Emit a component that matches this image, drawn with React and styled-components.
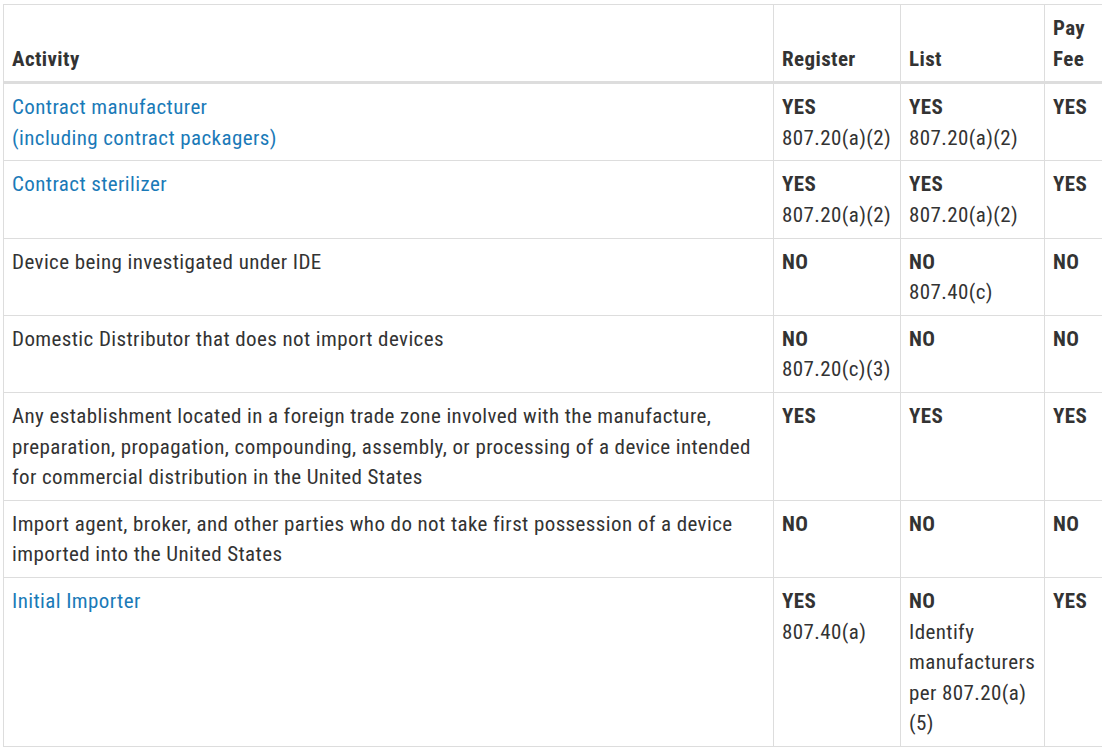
import React from "react";
import styled, { createGlobalStyle } from "styled-components";

const GlobalStyle = createGlobalStyle`
  html, body {
    margin: 0;
    padding: 0;
    background: #fff;
    overflow: hidden;
  }
  body {
    font-family: "Roboto Condensed", Roboto, "Liberation Sans", sans-serif;
    font-stretch: 92%;
    color: #333;
  }
`;

const rows = [
  {
    activity: ["Contract manufacturer", "(including contract packagers)"],
    link: true,
    register: ["YES", "807.20(a)(2)"],
    list: ["YES", "807.20(a)(2)"],
    fee: "YES",
  },
  {
    activity: ["Contract sterilizer"],
    link: true,
    register: ["YES", "807.20(a)(2)"],
    list: ["YES", "807.20(a)(2)"],
    fee: "YES",
  },
  {
    activity: ["Device being investigated under IDE"],
    register: ["NO"],
    list: ["NO", "807.40(c)"],
    fee: "NO",
  },
  {
    activity: ["Domestic Distributor that does not import devices"],
    register: ["NO", "807.20(c)(3)"],
    list: ["NO"],
    fee: "NO",
  },
  {
    activity: [
      "Any establishment located in a foreign trade zone involved with the manufacture, preparation, propagation, compounding, assembly, or processing of a device intended for commercial distribution in the United States",
    ],
    register: ["YES"],
    list: ["YES"],
    fee: "YES",
  },
  {
    activity: [
      "Import agent, broker, and other parties who do not take first possession of a device imported into the United States",
    ],
    register: ["NO"],
    list: ["NO"],
    fee: "NO",
  },
  {
    activity: ["Initial Importer"],
    link: true,
    register: ["YES", "807.40(a)"],
    list: ["NO", "Identify manufacturers per 807.20(a)(5)"],
    fee: "YES",
  },
];

export default function App() {
  return (
    <>
      <GlobalStyle />
      <Page>
        <Table>
          <colgroup>
            <col style={{ width: 770 }} />
            <col style={{ width: 127 }} />
            <col style={{ width: 144 }} />
            <col style={{ width: 66 }} />
          </colgroup>
          <thead>
            <tr>
              <Th>Activity</Th>
              <Th>Register</Th>
              <Th>List</Th>
              <Th>Pay Fee</Th>
            </tr>
          </thead>
          <tbody>
            {rows.map((r, i) => (
              <tr key={i}>
                <Td>
                  {r.link ? (
                    <Link href="#">
                      {r.activity.map((t, j) => (
                        <React.Fragment key={j}>
                          {j > 0 && <br />}
                          {t}
                        </React.Fragment>
                      ))}
                    </Link>
                  ) : (
                    r.activity[0]
                  )}
                </Td>
                <Td>
                  <Strong>{r.register[0]}</Strong>
                  {r.register[1] && (
                    <>
                      <br />
                      {r.register[1]}
                    </>
                  )}
                </Td>
                <Td>
                  <Strong>{r.list[0]}</Strong>
                  {r.list[1] && (
                    <>
                      <br />
                      {r.list[1]}
                    </>
                  )}
                </Td>
                <Td>
                  <Strong>{r.fee}</Strong>
                </Td>
              </tr>
            ))}
          </tbody>
        </Table>
      </Page>
    </>
  );
}

const Page = styled.div`
  padding: 4px 0 0 3px;
  width: 1200px;
`;

const Table = styled.table`
  border-collapse: collapse;
  table-layout: fixed;
  width: 1107px;
  font-size: 21px;
  line-height: 30.6px;
  letter-spacing: 0.4px;
  border: 1px solid #ddd;
`;

const Th = styled.th`
  text-align: left;
  vertical-align: bottom;
  font-weight: 700;
  color: #333;
  padding: 8px 8px 7px;
  border: 1px solid #ddd;
  border-bottom: 3px solid #ddd;
`;

const Td = styled.td`
  vertical-align: top;
  padding: 8px 8px 7px;
  border: 1px solid #ddd;
  color: #333;
`;

const Strong = styled.strong`
  font-weight: 700;
`;

const Link = styled.a`
  color: #1a7ab8;
  text-decoration: none;
`;
